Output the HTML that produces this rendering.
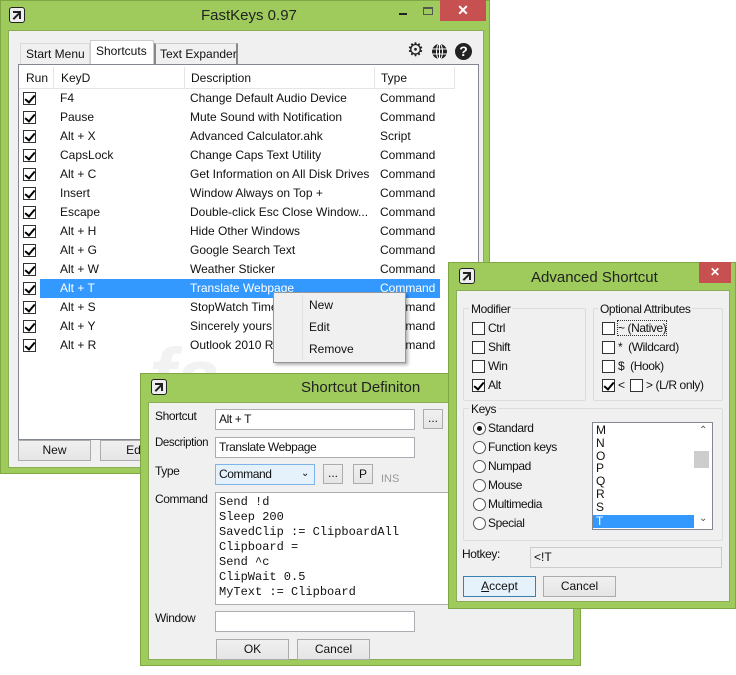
<!DOCTYPE html>
<html><head><meta charset="utf-8"><style>
*{box-sizing:border-box;margin:0;padding:0}
body{width:736px;height:675px;background:#fff;position:relative;overflow:hidden;font-family:"Liberation Sans",sans-serif;font-size:12px;color:#111}
.abs{position:absolute;white-space:nowrap}
.win{position:absolute;background:#9ecb5c;border:1px solid #7fa844}
.client{position:absolute;background:#f0f0f0;border:1px solid #8aae55}
.ticon{position:absolute;width:16px;height:16px;border:1.5px solid #222;border-radius:3px;background:#eee}
.ticon:after{content:"";position:absolute;left:3px;top:3px;width:6px;height:6px;border-top:2px solid #222;border-right:2px solid #222}
.ticon:before{content:"";position:absolute;left:2px;top:7px;width:9px;height:2px;background:#222;transform:rotate(-45deg)}
.title{position:absolute;font-size:15px;color:#222;white-space:nowrap}
.cb{position:absolute;width:13px;height:13px;border:1px solid #333;background:#fff}
.cb.on:after{content:"";position:absolute;left:3px;top:0px;width:4px;height:8px;border-right:2px solid #000;border-bottom:2px solid #000;transform:rotate(40deg)}
.btn{position:absolute;border:1px solid #acacac;background:linear-gradient(#f0f0f0,#e5e5e5);text-align:center;font-size:12px;line-height:18px}
.inp{position:absolute;background:#fff;border:1px solid #abadb3;font-size:12px;padding-left:3px;line-height:18px;white-space:nowrap}
.grp{position:absolute;border:1px solid #dcdcdc;border-radius:2px}
.glab{position:absolute;background:#f0f0f0;padding:0 2px;font-size:12px;white-space:nowrap}
.rad{position:absolute;width:13px;height:13px;border:1px solid #555;border-radius:50%;background:#fff}
.row{position:absolute;left:17px;width:436px;height:19px;line-height:19px;white-space:nowrap}
.row span{position:absolute}
.nar{letter-spacing:-0.4px}
</style></head><body>

<div class="win" style="left:0;top:0;width:490px;height:474px">
  <div class="ticon" style="left:8px;top:6px"></div>
  <div class="title" style="left:200px;top:6px">FastKeys 0.97</div>
  <div class="abs" style="left:398px;top:12px;width:8px;height:2px;background:#222"></div>
  <div class="abs" style="left:422px;top:6px;width:10px;height:8px;border:1px solid #555;border-top-width:2px"></div>
  <div class="abs" style="left:439px;top:-1px;width:46px;height:21px;background:#c75050;color:#fff;text-align:center;font-size:14px;font-weight:bold;line-height:20px">✕</div>
  <div class="client" style="left:7px;top:29px;width:476px;height:438px">
    <div class="abs" style="left:11px;top:12px;width:70px;height:21px;border:1px solid #d9d9d9;border-bottom:none;line-height:20px;padding-left:5px;font-size:12px">Start Menu</div>
    <div class="abs" style="left:81px;top:9px;width:64px;height:25px;border:1px solid #ccc;border-bottom:none;background:#fff;line-height:20px;padding-left:5px;font-size:12px">Shortcuts</div>
    <div class="abs" style="left:145px;top:12px;width:84px;height:21px;border:1px solid #ccc;border-bottom:none;border-left:2px solid #888;border-right:2px solid #888;line-height:20px;padding-left:4px;font-size:12px">Text Expander</div>
    <div class="abs" style="left:398px;top:10px;font-size:19px;line-height:20px;color:#222">⚙</div>
    <svg class="abs" style="left:422px;top:12px" width="17" height="17" viewBox="0 0 17 17"><circle cx="8.5" cy="8.5" r="7.5" fill="#222"/><g stroke="#fff" stroke-width="1" fill="none"><ellipse cx="8.5" cy="8.5" rx="3" ry="7.5"/><line x1="1" y1="6" x2="16" y2="6"/><line x1="1" y1="11" x2="16" y2="11"/><line x1="8.5" y1="1" x2="8.5" y2="16"/></g></svg>
    <div class="abs" style="left:446px;top:12px;width:17px;height:17px;border-radius:50%;background:#222;color:#fff;font-weight:bold;font-size:14px;text-align:center;line-height:17px">?</div>
    <div class="abs" style="left:9px;top:33px;width:461px;height:376px;background:#fff;border:1px solid #828790"></div>
    <div class="abs" style="left:10px;top:34px;width:436px;height:24px;border-bottom:1px solid #e5e5e5"></div>
    <div class="abs" style="left:44px;top:36px;width:1px;height:22px;background:#e5e5e5"></div>
    <div class="abs" style="left:175px;top:36px;width:1px;height:22px;background:#e5e5e5"></div>
    <div class="abs" style="left:365px;top:36px;width:1px;height:22px;background:#e5e5e5"></div>
    <div class="abs" style="left:445px;top:36px;width:1px;height:22px;background:#e5e5e5"></div>
    <div class="abs" style="left:17px;top:40px;font-size:12px">Run</div>
    <div class="abs" style="left:52px;top:40px;font-size:12px">KeyD</div>
    <div class="abs" style="left:182px;top:40px;font-size:12px">Description</div>
    <div class="abs" style="left:372px;top:40px;font-size:12px">Type</div>
    <div class="abs" style="left:140px;top:300px;font-size:80px;font-weight:bold;font-style:italic;color:#f2f2f2">fa</div>
  </div>
  <div class="btn" style="left:17px;top:439px;width:73px;height:21px">New</div>
  <div class="btn" style="left:99px;top:439px;width:73px;height:21px">Edit</div>
</div>

<div class="abs" style="left:40px;top:279px;width:400px;height:19px;background:#3399ff"></div>
<div class="row" style="top:89px"><span class="cb on" style="left:6px;top:3px"></span><span style="left:43px">F4</span><span style="left:173px">Change Default Audio Device</span><span style="left:363px">Command</span></div>
<div class="row" style="top:108px"><span class="cb on" style="left:6px;top:3px"></span><span style="left:43px">Pause</span><span style="left:173px">Mute Sound with Notification</span><span style="left:363px">Command</span></div>
<div class="row" style="top:127px"><span class="cb on" style="left:6px;top:3px"></span><span style="left:43px">Alt + X</span><span style="left:173px">Advanced Calculator.ahk</span><span style="left:363px">Script</span></div>
<div class="row" style="top:146px"><span class="cb on" style="left:6px;top:3px"></span><span style="left:43px">CapsLock</span><span style="left:173px">Change Caps Text Utility</span><span style="left:363px">Command</span></div>
<div class="row" style="top:165px"><span class="cb on" style="left:6px;top:3px"></span><span style="left:43px">Alt + C</span><span style="left:173px">Get Information on All Disk Drives</span><span style="left:363px">Command</span></div>
<div class="row" style="top:184px"><span class="cb on" style="left:6px;top:3px"></span><span style="left:43px">Insert</span><span style="left:173px">Window Always on Top +</span><span style="left:363px">Command</span></div>
<div class="row" style="top:203px"><span class="cb on" style="left:6px;top:3px"></span><span style="left:43px">Escape</span><span style="left:173px">Double-click Esc Close Window...</span><span style="left:363px">Command</span></div>
<div class="row" style="top:222px"><span class="cb on" style="left:6px;top:3px"></span><span style="left:43px">Alt + H</span><span style="left:173px">Hide Other Windows</span><span style="left:363px">Command</span></div>
<div class="row" style="top:241px"><span class="cb on" style="left:6px;top:3px"></span><span style="left:43px">Alt + G</span><span style="left:173px">Google Search Text</span><span style="left:363px">Command</span></div>
<div class="row" style="top:260px"><span class="cb on" style="left:6px;top:3px"></span><span style="left:43px">Alt + W</span><span style="left:173px">Weather Sticker</span><span style="left:363px">Command</span></div>
<div class="row" style="top:279px;color:#fff"><span class="cb on" style="left:6px;top:3px"></span><span style="left:43px">Alt + T</span><span style="left:173px">Translate Webpage</span><span style="left:363px">Command</span></div>
<div class="row" style="top:298px"><span class="cb on" style="left:6px;top:3px"></span><span style="left:43px">Alt + S</span><span style="left:173px">StopWatch Timer</span><span style="left:363px">Command</span></div>
<div class="row" style="top:317px"><span class="cb on" style="left:6px;top:3px"></span><span style="left:43px">Alt + Y</span><span style="left:173px">Sincerely yours,</span><span style="left:363px">Command</span></div>
<div class="row" style="top:336px"><span class="cb on" style="left:6px;top:3px"></span><span style="left:43px">Alt + R</span><span style="left:173px">Outlook 2010 Reminder</span><span style="left:363px">Command</span></div>

<div class="abs" style="left:273px;top:292px;width:133px;height:71px;background:#f0f0f0;border:1px solid #979797;box-shadow:2px 2px 3px rgba(0,0,0,.3)">
  <div class="abs" style="left:28px;top:2px;width:1px;height:65px;background:#e0e0e0"></div>
  <div class="abs" style="left:35px;top:5px">New</div>
  <div class="abs" style="left:35px;top:27px">Edit</div>
  <div class="abs" style="left:35px;top:49px">Remove</div>
</div>

<div class="win" style="left:140px;top:373px;width:441px;height:293px">
  <div class="ticon" style="left:10px;top:5px"></div>
  <div class="title" style="left:160px;top:5px">Shortcut Definiton</div>
  <div class="client" style="left:7px;top:28px;width:426px;height:258px"></div>
</div>
<div class="abs nar" style="left:155px;top:409px">Shortcut</div>
<div class="inp nar" style="left:215px;top:409px;width:200px;height:21px">Alt + T</div>
<div class="btn" style="left:423px;top:409px;width:20px;height:20px;line-height:16px">...</div>
<div class="abs nar" style="left:155px;top:437px;font-size:11.5px">Description</div>
<div class="inp nar" style="left:215px;top:437px;width:200px;height:21px">Translate Webpage</div>
<div class="abs nar" style="left:155px;top:464px">Type</div>
<div class="inp nar" style="left:215px;top:464px;width:100px;height:21px;background:#e5f1fb;border-color:#7eb4ea">Command<span style="position:absolute;right:5px;top:0;font-size:10px">⌄</span></div>
<div class="btn" style="left:323px;top:464px;width:20px;height:20px;line-height:16px">...</div>
<div class="btn" style="left:353px;top:464px;width:20px;height:20px">P</div>
<div class="abs" style="left:381px;top:473px;color:#999;font-size:11px">INS</div>
<div class="abs nar" style="left:155px;top:492px">Command</div>
<div class="abs" style="left:215px;top:492px;width:240px;height:113px;background:#fff;border:1px solid #abadb3;font-family:'Liberation Mono',monospace;font-size:12px;line-height:15px;padding:2px 3px;white-space:pre">Send !d
Sleep 200
SavedClip := ClipboardAll
Clipboard =
Send ^c
ClipWait 0.5
MyText := Clipboard</div>
<div class="abs nar" style="left:155px;top:611px">Window</div>
<div class="inp" style="left:215px;top:611px;width:200px;height:21px"></div>
<div class="btn" style="left:216px;top:639px;width:73px;height:21px">OK</div>
<div class="btn" style="left:297px;top:639px;width:73px;height:21px">Cancel</div>

<div class="win" style="left:448px;top:262px;width:288px;height:347px">
  <div class="ticon" style="left:10px;top:5px"></div>
  <div class="title" style="left:82px;top:6px">Advanced Shortcut</div>
  <div class="abs" style="left:250px;top:-1px;width:32px;height:21px;background:#c75050;color:#fff;text-align:center;font-weight:bold;line-height:20px">✕</div>
  <div class="client" style="left:7px;top:27px;width:274px;height:312px"></div>
</div>
<div class="grp" style="left:463px;top:308px;width:123px;height:93px"></div>
<div class="glab nar" style="left:469px;top:302px">Modifier</div>
<div class="cb" style="left:472px;top:322px"></div><div class="abs nar" style="left:488px;top:321px">Ctrl</div>
<div class="cb" style="left:472px;top:341px"></div><div class="abs nar" style="left:488px;top:340px">Shift</div>
<div class="cb" style="left:472px;top:360px"></div><div class="abs nar" style="left:488px;top:359px">Win</div>
<div class="cb on" style="left:472px;top:379px"></div><div class="abs nar" style="left:488px;top:378px">Alt</div>
<div class="grp" style="left:593px;top:308px;width:130px;height:93px"></div>
<div class="glab nar" style="left:598px;top:302px">Optional Attributes</div>
<div class="cb" style="left:602px;top:322px"></div><div class="abs nar" style="left:618px;top:321px;outline:1px dotted #333">~ (Native)</div>
<div class="cb" style="left:602px;top:341px"></div><div class="abs nar" style="left:618px;top:340px">*&nbsp; (Wildcard)</div>
<div class="cb" style="left:602px;top:360px"></div><div class="abs nar" style="left:618px;top:359px">$&nbsp; (Hook)</div>
<div class="cb on" style="left:602px;top:379px"></div><div class="abs" style="left:618px;top:378px">&lt;</div>
<div class="cb" style="left:630px;top:379px"></div><div class="abs nar" style="left:646px;top:378px">&gt; (L/R only)</div>
<div class="grp" style="left:463px;top:408px;width:260px;height:133px"></div>
<div class="glab nar" style="left:469px;top:402px">Keys</div>
<div class="rad" style="left:473px;top:422px"><div class="abs" style="left:3px;top:3px;width:5px;height:5px;border-radius:50%;background:#111"></div></div><div class="abs nar" style="left:488px;top:421px">Standard</div>
<div class="rad" style="left:473px;top:441px"></div><div class="abs nar" style="left:488px;top:440px">Function keys</div>
<div class="rad" style="left:473px;top:460px"></div><div class="abs nar" style="left:488px;top:459px">Numpad</div>
<div class="rad" style="left:473px;top:479px"></div><div class="abs nar" style="left:488px;top:478px">Mouse</div>
<div class="rad" style="left:473px;top:498px"></div><div class="abs nar" style="left:488px;top:497px">Multimedia</div>
<div class="rad" style="left:473px;top:517px"></div><div class="abs nar" style="left:488px;top:516px">Special</div>
<div class="abs" style="left:592px;top:422px;width:121px;height:108px;background:#fff;border:1px solid #828790;font-size:12px;line-height:12.8px;padding:1px 3px">M<br>N<br>O<br>P<br>Q<br>R<br>S</div>
<div class="abs" style="left:593px;top:515px;width:101px;height:13px;background:#3399ff;color:#fff;padding-left:3px;line-height:13px">T</div>
<div class="abs" style="left:699px;top:425px;font-size:10px;color:#555">⌃</div>
<div class="abs" style="left:694px;top:451px;width:15px;height:17px;background:#cdcdcd"></div>
<div class="abs" style="left:699px;top:513px;font-size:10px;color:#555">⌄</div>
<div class="abs nar" style="left:462px;top:547px">Hotkey:</div>
<div class="inp" style="left:530px;top:547px;width:192px;height:21px;background:#f0f0f0;border-color:#ccc">&lt;!T</div>
<div class="btn" style="left:463px;top:576px;width:73px;height:21px;border-color:#3c7fb1;background:#e5f1fb"><u>A</u>ccept</div>
<div class="btn" style="left:543px;top:576px;width:73px;height:21px">Cancel</div>
</body></html>
